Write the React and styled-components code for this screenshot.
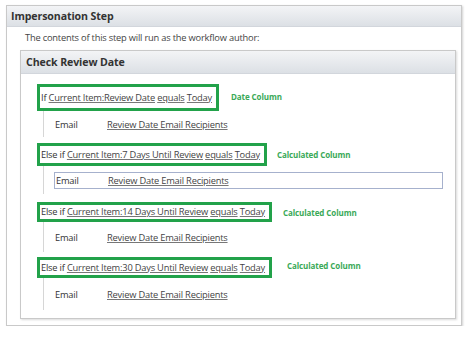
import React from "react";
import styled, { createGlobalStyle } from "styled-components";

const GlobalStyle = createGlobalStyle`
  *, *::before, *::after {
    box-sizing: border-box;
  }
  body {
    margin: 0;
    background: #ffffff;
    font-family: "Open Sans", "Noto Sans", sans-serif;
    color: #333333;
  }
`;

const Page = styled.div`
  padding: 5px 0 0 6px;
`;

const OuterPanel = styled.section`
  width: 456px;
  border: 1px solid #c9c9c9;
  box-shadow: 1px 1px 2px rgba(0, 0, 0, 0.18);
  padding-bottom: 6px;
`;

const PanelHeader = styled.div`
  display: flex;
  align-items: center;
  height: ${(p) => p.$height}px;
  padding-left: ${(p) => p.$indent}px;
  background: linear-gradient(#f3f4f6, #dce0e5);
  border-bottom: 1px solid #d2d6dc;
  font-size: 10.6px;
  font-weight: 700;
  color: #333;
  letter-spacing: -0.1px;
`;

const Description = styled.p`
  margin: 0;
  height: 23px;
  display: flex;
  align-items: center;
  padding: 0 0 2px 18px;
  font-size: 9.3px;
  letter-spacing: -0.2px;
  color: #444;
`;

const InnerPanel = styled.section`
  margin-left: 13px;
  width: 436px;
  border: 1px solid #c9c9c9;
  box-shadow: 1px 1px 2px rgba(0, 0, 0, 0.15);
`;

const PanelBody = styled.div`
  padding: 10px 0 8px 16px;
`;

const Block = styled.div`
  margin-top: ${(p) => p.$gap}px;
`;

const ConditionLine = styled.div`
  display: flex;
  align-items: center;
`;

const ConditionBox = styled.div`
  display: flex;
  align-items: center;
  height: ${(p) => p.$height}px;
  padding: 0 4px 1px 1px;
  border: 3px solid #22a24a;
  font-size: 9.3px;
  letter-spacing: -0.2px;
  white-space: nowrap;
  color: #333;
`;

const Link = styled.span`
  text-decoration: underline;
  text-decoration-color: #777;
  text-underline-offset: 1px;
  color: #444;
`;

const Note = styled.span`
  margin-left: ${(p) => p.$gap}px;
  margin-top: ${(p) => p.$lift}px;
  font-size: 8px;
  font-weight: 700;
  letter-spacing: -0.1px;
  color: #3aa957;
`;

const ActionRow = styled.div`
  display: flex;
  align-items: center;
  height: ${(p) => p.$height}px;
  margin-left: 6px;
  border-left: 1px solid #d6d6d6;
  padding-left: ${(p) => (p.$selected ? 10 : 11)}px;
`;

const ActionCell = styled.div`
  display: flex;
  align-items: center;
  font-size: 9.3px;
  letter-spacing: -0.2px;
  color: #333;
  ${(p) =>
    p.$selected &&
    `
    width: 389px;
    height: 17px;
    border: 1px solid #a6b1cd;
    padding-left: 1px;
  `}
`;

const ActionName = styled.span`
  width: 52px;
`;

const rows = [
  { prefix: "If", field: "Current Item:Review Date", boxH: 27, gap: 0, note: "Date Column", noteGap: 12, lift: -2, actionH: 26 },
  { prefix: "Else if", field: "Current Item:7 Days Until Review", boxH: 23, gap: 6, note: "Calculated Column", noteGap: 10, lift: 0, actionH: 28, selected: true },
  { prefix: "Else if", field: "Current Item:14 Days Until Review", boxH: 20, gap: 8, note: "Calculated Column", noteGap: 11, lift: 0, actionH: 30 },
  { prefix: "Else if", field: "Current Item:30 Days Until Review", boxH: 21, gap: 5, note: "Calculated Column", noteGap: 15, lift: -4, actionH: 32 },
];

export default function App() {
  return (
    <>
      <GlobalStyle />
      <Page>
        <OuterPanel>
          <PanelHeader $height={21} $indent={4}>Impersonation Step</PanelHeader>
          <Description>The contents of this step will run as the workflow author:</Description>
          <InnerPanel>
            <PanelHeader $height={23} $indent={5}>Check Review Date</PanelHeader>
            <PanelBody>
              {rows.map((r, i) => (
                <Block key={i} $gap={r.gap}>
                  <ConditionLine>
                    <ConditionBox $height={r.boxH}>
                      {r.prefix}&nbsp;<Link>{r.field}</Link>&nbsp;<Link>equals</Link>&nbsp;<Link>Today</Link>
                    </ConditionBox>
                    <Note $gap={r.noteGap} $lift={r.lift}>{r.note}</Note>
                  </ConditionLine>
                  <ActionRow $height={r.actionH} $selected={r.selected}>
                    <ActionCell $selected={r.selected}>
                      <ActionName>Email</ActionName>
                      <Link>Review Date Email Recipients</Link>
                    </ActionCell>
                  </ActionRow>
                </Block>
              ))}
            </PanelBody>
          </InnerPanel>
        </OuterPanel>
      </Page>
    </>
  );
}
